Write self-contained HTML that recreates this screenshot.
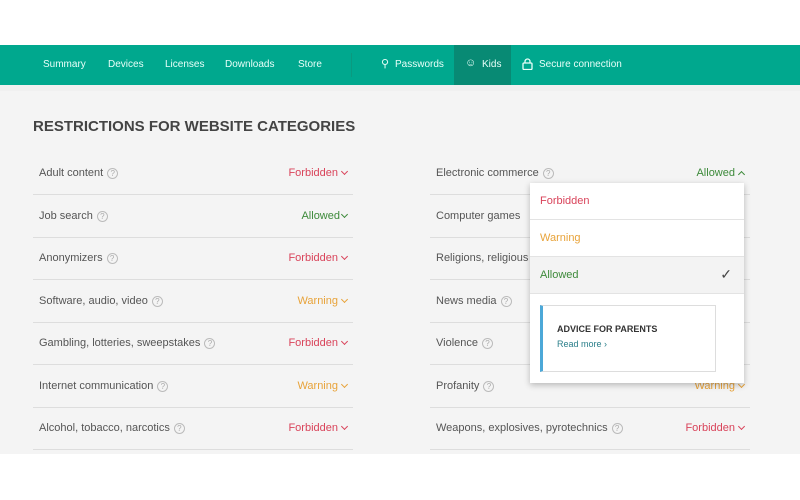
<!DOCTYPE html>
<html><head><style>
*{margin:0;padding:0;box-sizing:border-box}
body{width:800px;height:500px;background:#fff;font-family:"Liberation Sans",sans-serif;position:relative;overflow:hidden}
.nav{position:absolute;top:45px;left:0;width:800px;height:40px;background:#00a88e}
.strip{position:absolute;top:85px;left:0;width:800px;height:6px;background:#f0f0f0}
.nav span{position:absolute;top:14px;color:#e8fff9;font-size:10px}
.kids{position:absolute;left:454px;top:0;width:57px;height:40px;background:#088a74}
.div{position:absolute;left:351px;top:8px;width:1px;height:24px;background:#0a9a80}
.main{position:absolute;top:91px;left:0;width:800px;height:363px;background:#f4f4f4}
h1{position:absolute;left:33px;top:118px;font-size:15px;color:#444;font-weight:bold}
.row{position:absolute;width:320px;height:42.5px;border-bottom:1px solid #ddd;font-size:11px;color:#555}
.row .l{position:absolute;left:6px;top:15px;white-space:nowrap;line-height:12px}
.row .v{position:absolute;right:6px;top:15px;white-space:nowrap;line-height:12px}
.q{display:inline-block;width:11px;height:11px;border:1px solid #bbb;border-radius:50%;font-size:8px;color:#aaa;text-align:center;line-height:9px;margin-left:4px;vertical-align:top;margin-top:1px}
.ch{display:inline-block;width:5px;height:5px;border-right:1.2px solid currentColor;border-bottom:1.2px solid currentColor;transform:rotate(45deg);margin-left:4px;vertical-align:top;margin-top:2px}
.up{transform:rotate(-135deg);margin-top:5px}
.f{color:#d9435a}.w{color:#e8a33a}.a{color:#3d8a3a}
.dd{position:absolute;left:530px;top:183px;width:214px;height:200px;background:#fff;box-shadow:0 2px 6px rgba(0,0,0,.25);font-size:11px}
.dd .o{height:37px;border-bottom:1px solid #e3e3e3;padding:12px 10px;position:relative}
.adv{position:absolute;left:10px;top:122px;width:176px;height:67px;border:1px solid #ddd;border-left:3px solid #4ca8d8;padding:18px 14px}
</style></head><body>
<div class="nav">
<span style="left:43px">Summary</span><span style="left:108px">Devices</span><span style="left:165px">Licenses</span><span style="left:225px">Downloads</span><span style="left:298px">Store</span>
<div class="div"></div>
<span style="left:381px;font-size:11px;top:12px">⚲</span><span style="left:395px">Passwords</span>
<div class="kids"></div>
<span style="left:465px;top:12px;font-size:11px">☺</span><span style="left:482px">Kids</span>
<svg style="position:absolute;left:522px;top:13px" width="11" height="12" viewBox="0 0 11 12"><rect x="1" y="5" width="9" height="6.5" rx="1" fill="none" stroke="#e8fff9" stroke-width="1.3"/><path d="M3 5V3.5a2.5 2.5 0 0 1 5 0V5" fill="none" stroke="#e8fff9" stroke-width="1.3"/></svg>
<span style="left:539px">Secure connection</span>
</div>
<div class="strip"></div>
<div class="main"></div>
<h1>RESTRICTIONS FOR WEBSITE CATEGORIES</h1>

<div class="row" style="left:33px;top:152px"><span class="l">Adult content<span class="q">?</span></span><span class="v f">Forbidden<i class="ch"></i></span></div>
<div class="row" style="left:33px;top:195px"><span class="l">Job search<span class="q">?</span></span><span class="v a">Allowed<i class="ch" style="margin-left:2px"></i></span></div>
<div class="row" style="left:33px;top:237px"><span class="l">Anonymizers<span class="q">?</span></span><span class="v f">Forbidden<i class="ch"></i></span></div>
<div class="row" style="left:33px;top:280px"><span class="l">Software, audio, video<span class="q">?</span></span><span class="v w">Warning<i class="ch"></i></span></div>
<div class="row" style="left:33px;top:322px"><span class="l">Gambling, lotteries, sweepstakes<span class="q">?</span></span><span class="v f">Forbidden<i class="ch"></i></span></div>
<div class="row" style="left:33px;top:365px"><span class="l">Internet communication<span class="q">?</span></span><span class="v w">Warning<i class="ch"></i></span></div>
<div class="row" style="left:33px;top:407px"><span class="l">Alcohol, tobacco, narcotics<span class="q">?</span></span><span class="v f">Forbidden<i class="ch"></i></span></div>

<div class="row" style="left:430px;top:152px"><span class="l">Electronic commerce<span class="q">?</span></span><span class="v a">Allowed<i class="ch up"></i></span></div>
<div class="row" style="left:430px;top:195px"><span class="l">Computer games</span></div>
<div class="row" style="left:430px;top:237px"><span class="l">Religions, religious</span></div>
<div class="row" style="left:430px;top:280px"><span class="l">News media<span class="q">?</span></span></div>
<div class="row" style="left:430px;top:322px"><span class="l">Violence<span class="q">?</span></span></div>
<div class="row" style="left:430px;top:365px"><span class="l">Profanity<span class="q">?</span></span><span class="v w">Warning<i class="ch"></i></span></div>
<div class="row" style="left:430px;top:407px"><span class="l">Weapons, explosives, pyrotechnics<span class="q">?</span></span><span class="v f">Forbidden<i class="ch"></i></span></div>

<div class="dd">
<div class="o f">Forbidden</div>
<div class="o w">Warning</div>
<div class="o a" style="background:#f3f3f3">Allowed<span style="position:absolute;right:12px;top:9px;color:#444;font-size:14px">✓</span></div>
<div class="adv"><div style="font-size:9px;font-weight:bold;color:#333">ADVICE FOR PARENTS</div><div style="font-size:9px;color:#2a7f8a;margin-top:5px">Read more ›</div></div>
</div>
</body></html>
